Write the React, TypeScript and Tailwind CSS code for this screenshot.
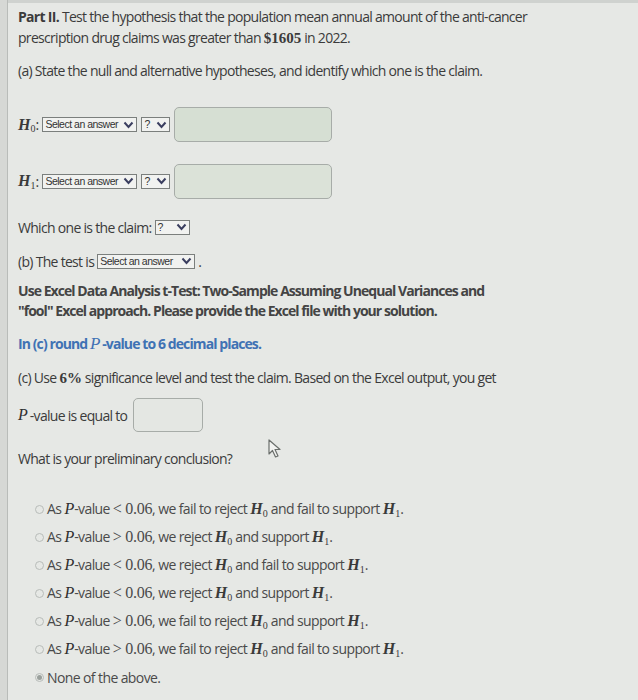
import React from 'react'

const serif = { fontFamily: '"Liberation Serif", "Times New Roman", serif' }

function M({ children, bold = false }: { children: React.ReactNode; bold?: boolean }) {
    return (
        <span className={`italic ${bold ? 'font-bold' : ''} text-[16px] text-[#2f2f2f] tracking-normal`} style={serif}>
            {children}
        </span>
    )
}

function H({ n }: { n: number }) {
    return (
        <span className="italic font-bold text-[16px] text-[#3a3a3a] tracking-normal" style={serif}>
            H<sub className="text-[10px] not-italic font-normal">{n}</sub>
        </span>
    )
}

function Select({ label, w }: { label: string; w: string }) {
    return (
        <span className={`inline-flex items-center justify-between h-[15px] ${w} border border-[#7b7f7d] bg-[#f1f2f0] px-[2px] text-[10.5px] leading-none text-[#333] tracking-[-0.5px]`} style={{ fontFamily: '"Liberation Sans", Arial, sans-serif' }}>
            <span>{label}</span>
            <svg width="11" height="8" viewBox="0 0 11 8"><path d="M1.5 1.5 L5.5 6 L9.5 1.5" fill="none" stroke="#3b3f60" strokeWidth="2" /></svg>
        </span>
    )
}

function Num({ children }: { children: React.ReactNode }) {
    return <span style={serif} className="text-[16px] tracking-[-0.3px]">{children}</span>
}

function Option({ children, selected = false }: { children: React.ReactNode; selected?: boolean }) {
    return (
        <div className="flex items-center h-[28px] pl-[17px] text-[14px] text-[#4a4a4a] tracking-[-0.6px]">
            <span className="w-[9px] h-[9px] rounded-full border border-[#b8bcb9] mr-[3px] flex items-center justify-center">
                {selected && <span className="w-[5px] h-[5px] rounded-full bg-[#9aa09c]" />}
            </span>
            <span>{children}</span>
        </div>
    )
}

export default function App() {
    return (
        <div className="w-[638px] h-[700px] overflow-hidden bg-[#dfe1de] flex" style={{ fontFamily: '"Open Sans", Lato, sans-serif' }}>
            <div className="w-[8px] bg-[#d6d8d5] border-r border-[#b9bcb9]" />
            <div className="flex-1 bg-[#e6e8e5] border-t-[3px] border-[#cfd2cf] pl-[10px] pr-2 text-[14px] text-[#3b3b3b] tracking-[-0.7px]">
                <p className="mt-[3px] leading-[21px] whitespace-nowrap">
                    <b>Part II.</b> Test the hypothesis that the population mean annual amount of the anti-cancer
                    <br />
                    prescription drug claims was greater than <span className="font-bold text-[15px] tracking-normal" style={serif}>$1605</span> in 2022.
                </p>
                <p className="mt-[12px] leading-[20px]">(a) State the null and alternative hypotheses, and identify which one is the claim.</p>

                <div className="mt-[26px] flex items-center h-[35px]">
                    <H n={0} />
                    <span className="mr-[4px]">:</span>
                    <Select label="Select an answer" w="w-[95px]" />
                    <span className="w-[4px]" />
                    <Select label="?" w="w-[29px]" />
                    <span className="ml-[4px] w-[158px] h-[35px] rounded-[5px] border border-[#a7aca8] bg-[#d6dfd3]" />
                </div>

                <div className="mt-[21px] flex items-center h-[36px]">
                    <H n={1} />
                    <span className="mr-[4px]">:</span>
                    <Select label="Select an answer" w="w-[95px]" />
                    <span className="w-[4px]" />
                    <Select label="?" w="w-[29px]" />
                    <span className="ml-[4px] w-[158px] h-[35px] rounded-[5px] border border-[#a7aca8] bg-[#dbe2d8]" />
                </div>

                <div className="mt-[18px] flex items-center h-[20px]">
                    <span className="mr-[3px]">Which one is the claim:</span>
                    <Select label="?" w="w-[35px]" />
                </div>

                <div className="mt-[14px] flex items-center h-[20px]">
                    <span className="mr-[3px]">(b) The test is</span>
                    <Select label="Select an answer" w="w-[98px]" />
                    <span className="ml-[3px]">.</span>
                </div>

                <p className="mt-[10px] font-bold leading-[20px] text-[#444] whitespace-nowrap tracking-[-0.95px]">
                    Use Excel Data Analysis t-Test: Two-Sample Assuming Unequal Variances and
                    <br />
                    "fool" Excel approach. Please provide the Excel file with your solution.
                </p>

                <p className="mt-[13px] font-bold leading-[20px] text-[#3f72b4] tracking-[-0.9px]">
                    In (c) round <span className="italic font-normal text-[17px]" style={serif}>P</span> -value to 6 decimal places.
                </p>

                <p className="mt-[14px] leading-[20px]">
                    (c) Use <span className="font-bold text-[15px] tracking-normal" style={serif}>6%</span> significance level and test the claim. Based on the Excel output, you get
                </p>

                <div className="mt-[10px] flex items-center h-[34px]">
                    <M>P</M>
                    <span className="ml-[2px]">-value is equal to</span>
                    <span className="ml-[6px] w-[70px] h-[34px] rounded-[5px] border border-[#a7aca8] bg-[#e4e7e3]" />
                </div>

                <div className="relative mt-[17px] h-[20px] leading-[20px]">
                    What is your preliminary conclusion?
                    <svg className="absolute left-[249px] top-[-10px]" width="18" height="20" viewBox="0 0 18 20">
                        <path d="M2 1 L2 15 L5.5 11.5 L8.5 18 L11 17 L8 10.5 L13 10.5 Z" fill="#f2f3f1" stroke="#6b6f6c" strokeWidth="1.2" strokeLinejoin="round" />
                    </svg>
                </div>

                <div className="mt-[26px] flex flex-col">
                    <Option>As <M>P</M>-value <Num>&lt; 0.06</Num>, we fail to reject <H n={0} /> and fail to support <H n={1} />.</Option>
                    <Option>As <M>P</M>-value <Num>&gt; 0.06</Num>, we reject <H n={0} /> and support <H n={1} />.</Option>
                    <Option>As <M>P</M>-value <Num>&lt; 0.06</Num>, we reject <H n={0} /> and fail to support <H n={1} />.</Option>
                    <Option>As <M>P</M>-value <Num>&lt; 0.06</Num>, we reject <H n={0} /> and support <H n={1} />.</Option>
                    <Option>As <M>P</M>-value <Num>&gt; 0.06</Num>, we fail to reject <H n={0} /> and support <H n={1} />.</Option>
                    <Option>As <M>P</M>-value <Num>&gt; 0.06</Num>, we fail to reject <H n={0} /> and fail to support <H n={1} />.</Option>
                    <Option selected>None of the above.</Option>
                </div>
            </div>
        </div>
    )
}
